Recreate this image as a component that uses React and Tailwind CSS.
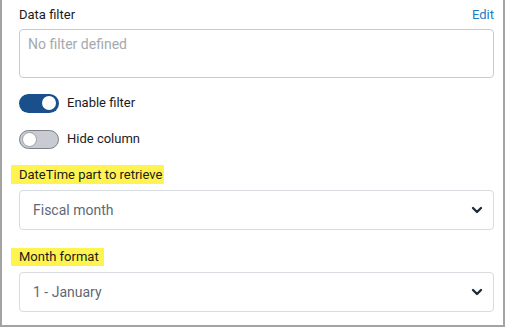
import { ChevronDown } from 'lucide-react';

function Toggle({ on, label }) {
  return (
    <div className="flex items-center gap-2 h-[18px]">
      <div
        className={
          on
            ? 'w-10 h-[19px] rounded-full bg-[#19508c] flex items-center justify-end px-[3px]'
            : 'w-10 h-[19px] rounded-full bg-[#c8ccd2] border border-[#7a8088] flex items-center justify-start px-[2px]'
        }
      >
        <div
          className={
            on
              ? 'w-[14px] h-[14px] rounded-full bg-white'
              : 'w-[15px] h-[15px] rounded-full bg-white border border-[#9aa0a8]'
          }
        />
      </div>
      <span className="text-[13px] text-[#1b1b1b]">{label}</span>
    </div>
  );
}

function Select({ value }) {
  return (
    <div className="h-[40px] rounded-[4px] border border-[#d8dbe0] flex items-center justify-between pl-[13px] pr-[8px]">
      <span className="text-[14px] text-[#5f6875]">{value}</span>
      <ChevronDown className="w-4 h-4 text-[#1d2a3a]" strokeWidth={3.5} />
    </div>
  );
}

export default function App() {
  return (
    <div
      className="w-[505px] h-[327px] bg-white border-l-2 border-r-2 border-b-2 border-[#a3a3a3] pl-[17px] pr-[9px] pt-[6px]"
      style={{ fontFamily: 'Roboto, "Liberation Sans", sans-serif' }}
    >
      <div className="flex items-center justify-between h-[17px]">
        <span className="text-[13px] text-[#1b1b1b]">Data filter</span>
        <span className="text-[13px] text-[#1b7cc4]">Edit</span>
      </div>
      <div className="mt-[6px] h-[49px] rounded-[4px] border border-[#c7cbd0] px-[8px] pt-[2px]">
        <span className="text-[14px] text-[#a6a9ad]">No filter defined</span>
      </div>
      <div className="mt-[16px] flex flex-col gap-[18px]">
        <Toggle on label="Enable filter" />
        <Toggle label="Hide column" />
      </div>
      <div className="mt-[17px] -ml-[8px] w-[153px] h-[19px] bg-[#fff44f] flex items-center pl-[8px]">
        <span className="text-[13px] text-[#1b1b1b]">DateTime part to retrieve</span>
      </div>
      <div className="mt-[6px]">
        <Select value="Fiscal month" />
      </div>
      <div className="mt-[18px] -ml-[8px] w-[93px] h-[18px] bg-[#fff44f] flex items-center pl-[8px]">
        <span className="text-[13px] text-[#1b1b1b]">Month format</span>
      </div>
      <div className="mt-[6px]">
        <Select value="1 - January" />
      </div>
    </div>
  );
}
